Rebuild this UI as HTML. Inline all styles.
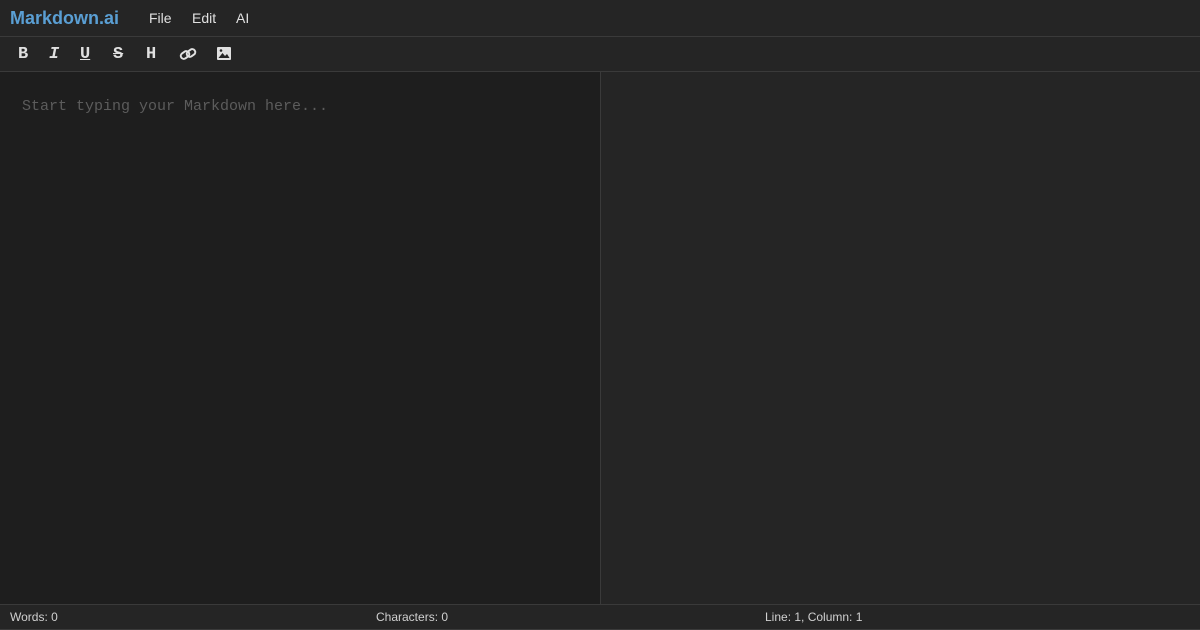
<!DOCTYPE html>
<html><head><style>
*{margin:0;padding:0;box-sizing:border-box}
body{width:1200px;height:630px;background:#1e1e1e;font-family:"Liberation Sans",sans-serif;overflow:hidden;position:relative}
.top{position:absolute;left:0;top:0;width:1200px;height:37px;background:#252525;border-bottom:1px solid #3a3a3a}
.logo{position:absolute;left:10px;top:8px;font-size:18px;font-weight:bold;color:#5a9fd4}
.menu{position:absolute;top:10px;font-size:14px;color:#e0e0e0}
.tb{position:absolute;left:0;top:37px;width:1200px;height:35px;background:#252525;border-bottom:1px solid #3a3a3a}
.ic{position:absolute;top:8px;color:#e0e0e0;font-family:"Liberation Mono",monospace;font-size:17px;font-weight:bold}
.ed{position:absolute;left:0;top:72px;width:601px;height:532px;background:#1e1e1e;border-right:1px solid #3a3a3a}
.ph{position:absolute;left:22px;top:26px;font-family:"Liberation Mono",monospace;font-size:15px;color:#5c5c5c}
.pv{position:absolute;left:601px;top:72px;width:599px;height:532px;background:#252525}
.st{position:absolute;left:0;top:604px;width:1200px;height:26px;background:#252525;border-top:1px solid #3a3a3a;border-bottom:1px solid #3a3a3a;font-size:12px;color:#d0d0d0}
.st span{position:absolute;top:5px}
</style></head><body>
<div class="top">
<div class="logo">Markdown.ai</div>
<div class="menu" style="left:149px">File</div>
<div class="menu" style="left:192px">Edit</div>
<div class="menu" style="left:236px">AI</div>
</div>
<div class="tb">
<div class="ic" style="left:18px">B</div>
<div class="ic" style="left:49px;font-style:italic">I</div>
<div class="ic" style="left:80px;text-decoration:underline">U</div>
<div class="ic" style="left:113px;text-decoration:line-through">S</div>
<div class="ic" style="left:146px">H</div>
<svg style="position:absolute;left:179px;top:9px" width="18" height="16" viewBox="0 0 18 16"><g fill="none" stroke="#e0e0e0" stroke-width="2"><rect x="1.5" y="6" width="9" height="6" rx="3" transform="rotate(-35 6 9)"/><rect x="7.5" y="4" width="9" height="6" rx="3" transform="rotate(-35 12 7)"/></g></svg>
<svg style="position:absolute;left:217px;top:10px" width="14" height="13" viewBox="0 0 14 13"><rect x="0" y="0" width="14" height="13" rx="1" fill="#e0e0e0"/><path d="M1.5 11 L5.5 6 L8 9 L10 7 L12.5 11 Z" fill="#252525"/><circle cx="4" cy="3.5" r="1.3" fill="#252525"/></svg>
</div>
<div class="ed"><div class="ph">Start typing your Markdown here...</div></div>
<div class="pv"></div>
<div class="st"><span style="left:10px">Words: 0</span><span style="left:376px">Characters: 0</span><span style="left:765px">Line: 1, Column: 1</span></div>
</body></html>
